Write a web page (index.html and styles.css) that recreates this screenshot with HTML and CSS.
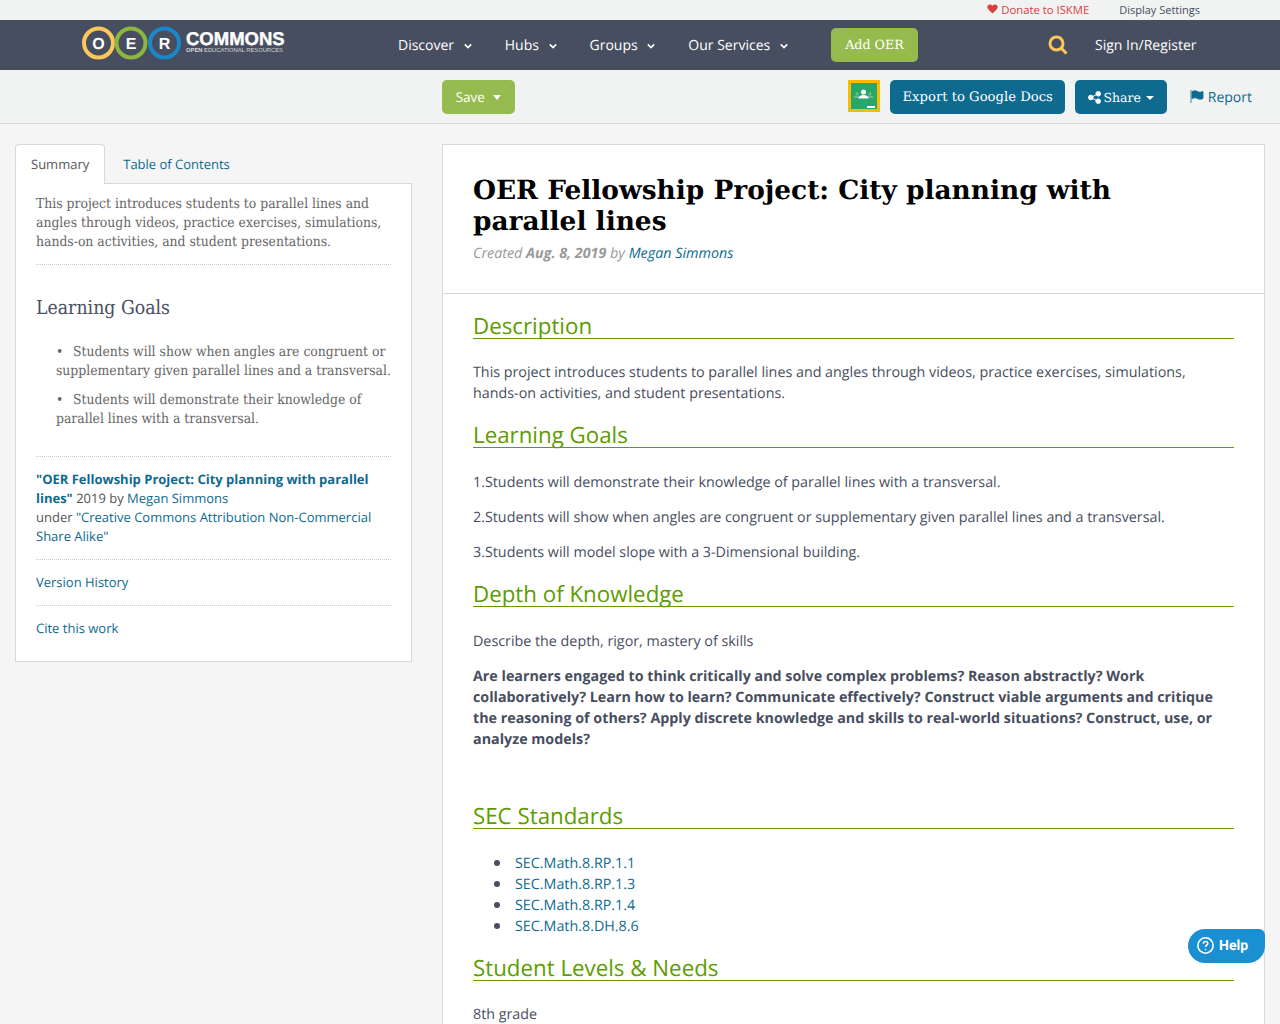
FILE: index.html
```html
<!DOCTYPE html>
<html lang="en">
<head>
  <meta charset="UTF-8" />
  <title>OER Fellowship Project: City planning with parallel lines</title>
  <link rel="stylesheet" href="styles.css">
</head>
<body>
  <div class="topbar">
    <a class="donate" href="#"><svg class="heart" viewBox="0 0 24 22"><path d="M12 21 2.500 11.500C-.5 8.500 0 4 3 2c2.800-1.900 6.500-1.200 9 2 2.500-3.200 6.200-3.900 9-2 3 2 3.500 6.500.5 9.500z"/></svg> Donate to ISKME</a>
    <a class="settings" href="#">Display Settings</a>
  </div>

  <div class="nav">
    <a class="logo" href="#">
      <svg class="logo-rings" viewBox="0 0 100 36" width="100" height="36">
        <circle cx="16.500" cy="18" r="14.500" fill="#474e60" stroke="#fbc75c" stroke-width="4"/>
        <circle cx="49" cy="18" r="14.500" fill="#474e60" stroke="#8db63e" stroke-width="4"/>
        <circle cx="82.500" cy="18" r="14.500" fill="#474e60" stroke="#1b87c9" stroke-width="4"/>
        <text x="16.500" y="23.500" class="ring-letter">O</text>
        <text x="49" y="23.500" class="ring-letter">E</text>
        <text x="82.500" y="23.500" class="ring-letter">R</text>
      </svg>
      <span class="logo-text">
        <span class="logo-name">COMMONS</span>
        <span class="logo-sub"><b>OPEN</b> EDUCATIONAL RESOURCES</span>
      </span>
    </a>
    <ul class="nav-menu">
      <li>Discover <svg class="chev" viewBox="0 0 10 6"><path d="M1 1l4 4 4-4"/></svg></li>
      <li>Hubs <svg class="chev" viewBox="0 0 10 6"><path d="M1 1l4 4 4-4"/></svg></li>
      <li>Groups <svg class="chev" viewBox="0 0 10 6"><path d="M1 1l4 4 4-4"/></svg></li>
      <li>Our Services <svg class="chev" viewBox="0 0 10 6"><path d="M1 1l4 4 4-4"/></svg></li>
    </ul>
    <a class="btn btn-green add-oer" href="#">Add OER</a>
    <svg class="search" viewBox="0 0 20 20"><circle cx="8.500" cy="8.500" r="6.500"/><path d="M13.500 13.500l5 5"/></svg>
    <a class="signin" href="#">Sign In/Register</a>
  </div>

  <div class="actions">
    <a class="btn btn-green save" href="#">Save <span class="caret"></span></a>
    <div class="actions-right">
      <span class="classroom">
        <svg viewBox="0 0 26 26" width="26" height="26">
          <rect width="26" height="26" fill="#27a768"/>
          <circle cx="6" cy="10.500" r="1.500" fill="#62bd8f"/>
          <circle cx="19" cy="10.500" r="1.500" fill="#62bd8f"/>
          <path d="M2.500 15c0-2 2-2.500 3.500-2.500S9.500 13 9.500 15zM15.500 15c0-2 2-2.500 3.500-2.500s3.500.5 3.500 2.500z" fill="#62bd8f"/>
          <circle cx="12.500" cy="9" r="2.500" fill="#fff"/>
          <path d="M7.500 15.500c0-2.500 3-3.500 5-3.500s5 1 5 3.500z" fill="#fff"/>
          <rect x="16" y="23" width="8" height="2" fill="#fff"/>
        </svg>
      </span>
      <a class="btn btn-blue export" href="#">Export to Google Docs</a>
      <a class="btn btn-blue share" href="#"><svg class="share-icon" viewBox="0 0 14 14"><circle cx="3" cy="7" r="2.500"/><circle cx="11" cy="3" r="2.500"/><circle cx="11" cy="11" r="2.500"/><path d="M3 7l8-4M3 7l8 4"/></svg>Share <span class="caret small"></span></a>
      <a class="report" href="#"><svg class="flag" viewBox="0 0 14 13"><path d="M1 0v13M2 1.500c2-1 4-1 5.500 0s3.500.8 5.500 0v7c-2 1-4 1-5.500 0s-3.500-.8-5.500 0z"/></svg> Report</a>
    </div>
  </div>

  <div class="page">
    <aside class="side">
      <div class="tabs">
        <a class="tab active" href="#">Summary</a>
        <a class="tab" href="#">Table of Contents</a>
      </div>
      <div class="side-panel">
        <p class="side-text">This project introduces students to parallel lines and angles through videos, practice exercises, simulations, hands-on activities, and student presentations.</p>
        <div class="side-goals">
          <h3>Learning Goals</h3>
          <p class="goal">Students will show when angles are congruent or supplementary given parallel lines and a transversal.</p>
          <p class="goal">Students will demonstrate their knowledge of parallel lines with a transversal.</p>
        </div>
        <div class="side-row">
          <a href="#"><b>"OER Fellowship Project: City planning with parallel lines"</b></a> 2019 by <a href="#">Megan Simmons</a><br>
          under <a href="#">"Creative Commons Attribution Non-Commercial Share Alike"</a>
        </div>
        <div class="side-row"><a href="#">Version History</a></div>
        <div class="side-row"><a href="#">Cite this work</a></div>
      </div>
    </aside>

    <main class="card">
      <header class="card-head">
        <h1>OER Fellowship Project: City planning with parallel lines</h1>
        <p class="byline">Created <b>Aug. 8, 2019</b> by <a href="#">Megan Simmons</a></p>
      </header>
      <div class="card-body">
        <h2>Description</h2>
        <p>This project introduces students to parallel lines and angles through videos, practice exercises, simulations, hands-on activities, and student presentations.</p>

        <h2>Learning Goals</h2>
        <p>1.Students will demonstrate their knowledge of parallel lines with a transversal.</p>
        <p>2.Students will show when angles are congruent or supplementary given parallel lines and a transversal.</p>
        <p>3.Students will model slope with a 3-Dimensional building.</p>

        <h2>Depth of Knowledge</h2>
        <p>Describe the depth, rigor, mastery of skills</p>
        <p class="strong">Are learners engaged to think critically and solve complex problems? Reason abstractly? Work collaboratively? Learn how to learn? Communicate effectively? Construct viable arguments and critique the reasoning of others? Apply discrete knowledge and skills to real-world situations? Construct, use, or analyze models?</p>

        <h2 class="gap-top">SEC Standards</h2>
        <ul class="standards">
          <li><a href="#">SEC.Math.8.RP.1.1</a></li>
          <li><a href="#">SEC.Math.8.RP.1.3</a></li>
          <li><a href="#">SEC.Math.8.RP.1.4</a></li>
          <li><a href="#">SEC.Math.8.DH.8.6</a></li>
        </ul>

        <h2 class="last-head">Student Levels &amp; Needs</h2>
        <p>8th grade</p>
      </div>
    </main>
  </div>

  <a class="help" href="#"><svg viewBox="0 0 20 20" width="17" height="17"><circle cx="10" cy="10" r="9"/><path d="M7.500 7.800c0-1.500 1.100-2.500 2.600-2.500s2.500 1 2.500 2.200c0 2-2.600 2-2.600 4.200"/><path d="M10 14v1.500"/></svg>Help</a>
</body>
</html>
```

FILE: styles.css
```css
html, body {
  height: 1024px;
  overflow: hidden;
}
body {
  margin: 0;
  background-color: #f5f5f5;
  color: #474e60;
  font-family: 'Open Sans', sans-serif;
  font-size: 14.3px;
  line-height: 21px;
  text-rendering: geometricPrecision;
}
a {
  color: #0e6a8f;
  text-decoration: none;
}
p {
  margin: 0;
}

.topbar {
  height: 20px;
  box-sizing: border-box;
  padding-right: 80px;
  background: #f1f3f2;
  display: flex;
  justify-content: flex-end;
  align-items: center;
  gap: 30px;
  font-size: 11px;
}
.donate {
  color: #d9403f;
  font-size: 11.300px;
}
.heart {
  width: 11px;
  height: 10px;
  fill: #d9403f;
}
.settings {
  color: #474e60;
}

.nav {
  height: 50px;
  background: #474e60;
  display: flex;
  align-items: center;
  color: #fff;
}
.logo {
  display: flex;
  align-items: center;
  margin: 0 0 5px 82px;
  width: 316px;
}
.ring-letter {
  font-family: 'Liberation Sans', sans-serif;
  font-size: 16px;
  font-weight: 700;
  fill: #fff;
  text-anchor: middle;
}
.logo-text {
  display: flex;
  flex-direction: column;
  margin-left: 4px;
  color: #fff;
  font-family: 'Liberation Sans', sans-serif;
}
.logo-name {
  font-size: 18.500px;
  font-weight: 700;
  line-height: 17px;
  -webkit-text-stroke: .4px #fff;
}
.logo-sub {
  font-size: 5.800px;
  line-height: 8px;
  white-space: nowrap;
  color: #d8dade;
}
.nav-menu {
  display: flex;
  list-style: none;
  margin: 0;
  padding: 0;
  width: 433px;
  font-size: 14px;
}
.nav-menu li {
  margin-right: 32px;
}
.chev {
  width: 8px;
  height: 6px;
  margin: 0 1px 0 6px;
  vertical-align: 1px;
  fill: none;
  stroke: #fff;
  stroke-width: 2;
}
.btn {
  display: inline-block;
  height: 34px;
  line-height: 34px;
  border-radius: 5px;
  color: #fff;
  text-align: center;
  font-family: 'DejaVu Serif', serif;
  font-size: 13.200px;
}
.btn-green {
  background: #95bb4e;
}
.btn-blue {
  background: #0e6a8f;
  line-height: 36px;
}
.add-oer {
  width: 87px;
  font-size: 12.700px;
}
.search {
  width: 20px;
  height: 20px;
  margin-left: 130px;
  fill: none;
  stroke: #fbc75c;
  stroke-width: 3;
}
.signin {
  color: #fff;
  margin-left: 27px;
  font-size: 14px;
}

.actions {
  height: 54px;
  box-sizing: border-box;
  border-bottom: 1px solid #d8d8d8;
  background: #f1f3f2;
  display: flex;
  align-items: flex-start;
  padding: 10px 28px 0 442px;
  justify-content: space-between;
}
.save {
  width: 73px;
  font-family: 'Open Sans', sans-serif;
  font-size: 13.500px;
}
.caret {
  display: inline-block;
  width: 0;
  height: 0;
  margin-left: 5px;
  vertical-align: 2px;
  border-top: 5px solid #fff;
  border-left: 4.500px solid transparent;
  border-right: 4.500px solid transparent;
}
.caret.small {
  margin-left: 1px;
  border-top-width: 4px;
  border-left-width: 4px;
  border-right-width: 4px;
}
.actions-right {
  display: flex;
  align-items: center;
}
.classroom {
  display: block;
  width: 26px;
  height: 26px;
  border: 3px solid #fbbc05;
  margin: -2px 10px 0 0;
}
.classroom svg {
  display: block;
}
.export {
  width: 175px;
  margin-right: 10px;
}
.share {
  width: 92px;
  margin-right: 23px;
  font-size: 12.500px;
}
.share-icon {
  width: 13px;
  height: 13px;
  margin-right: 2px;
  vertical-align: -2px;
  fill: #fff;
  stroke: #fff;
  stroke-width: 1;
}
.report {
  font-size: 14px;
}
.flag {
  width: 14px;
  height: 13px;
  vertical-align: -1px;
  fill: #0e6a8f;
  stroke: #0e6a8f;
  stroke-width: .8;
}

.page {
  display: flex;
  align-items: flex-start;
  padding: 20px 15px 0;
}
.side {
  width: 397px;
  margin-right: 30px;
  flex-shrink: 0;
}
.tabs {
  display: flex;
  height: 40px;
  font-size: 13px;
}
.tab {
  padding: 10px 18px 0;
  box-sizing: border-box;
  height: 40px;
}
.tab.active {
  padding: 9px 15px 0;
  background: #fff;
  color: #555;
  border: 1px solid #d8d8d8;
  border-bottom: none;
  border-radius: 4px 4px 0 0;
  position: relative;
  z-index: 1;
}
.side-panel {
  box-sizing: border-box;
  height: 479px;
  margin-top: -1px;
  padding: 2px 20px 0;
  background: #fff;
  border: 1px solid #d8d8d8;
  font-size: 13px;
  line-height: 19px;
}
.side-text, .goal {
  font-family: 'DejaVu Serif Condensed', 'DejaVu Serif', serif;
  font-size: 13.800px;
  color: #666;
  line-height: 19px;
}
.side-text {
  padding: 9px 0 12px;
  border-bottom: 1px dotted #ccc;
}
.side-goals {
  padding-bottom: 17px;
  border-bottom: 1px dotted #ccc;
}
.side-goals h3 {
  margin: 29px 0 22px;
  font-family: 'DejaVu Serif Condensed', 'DejaVu Serif', serif;
  font-size: 19.300px;
  font-weight: 400;
  line-height: 27px;
  color: #474e60;
}
.goal {
  padding-left: 20px;
  margin-bottom: 10px;
}
.goal::before {
  content: "•";
  display: inline-block;
  width: 17px;
}
.side-row {
  padding: 13px 0;
  border-bottom: 1px dotted #ccc;
  color: #555;
}
.side-row:last-child {
  border-bottom: none;
}

.card {
  width: 823px;
  box-sizing: border-box;
  background: #fff;
  border: 1px solid #d8d8d8;
  border-bottom: none;
  height: 880px;
}
.card-head {
  height: 149px;
  box-sizing: border-box;
  padding: 30px 30px 0;
  border-bottom: 1px solid #d8d8d8;
}
h1 {
  margin: 0;
  max-width: 680px;
  font-family: 'DejaVu Serif', serif;
  font-size: 26.400px;
  font-weight: 700;
  line-height: 31px;
  color: #000;
}
.byline {
  margin-top: 6px;
  font-style: italic;
  color: #999;
}
.card-body {
  padding: 0 30px;
}
h2 {
  margin: 17px 0 23px;
  padding-top: 1px;
  font-size: 22.300px;
  font-weight: 400;
  line-height: 26px;
  height: 25px;
  color: #5e9c00;
  border-bottom: 1px solid #5e9c00;
}
h2:first-child {
  margin: 18px 0 22px;
}
.card-body .last-head {
  margin-bottom: 22px;
}
.card-body p {
  padding-top: 1px;
  margin-bottom: 13px;
}
.strong {
  font-weight: 700;
}
.card-body .gap-top {
  margin-top: 52px;
}
.standards {
  list-style: none;
  margin: 0 0 14px;
  padding: 1px 0 0 42px;
}
.standards li::before {
  content: "";
  display: inline-block;
  width: 6px;
  height: 6px;
  margin: 0 15px 2px -21px;
  border-radius: 50%;
  background: #474e60;
}

.help {
  position: fixed;
  right: 15px;
  top: 929px;
  width: 77px;
  height: 34px;
  box-sizing: border-box;
  padding-left: 31px;
  background: #1a8fd1;
  color: #fff;
  border-radius: 17px 6px 17px 17px;
  font-family: 'Roboto', sans-serif;
  font-size: 14px;
  font-weight: 700;
  line-height: 34px;
}
.help svg {
  position: absolute;
  left: 9px;
  top: 8px;
  fill: none;
  stroke: #fff;
  stroke-width: 1.800;
}
```
